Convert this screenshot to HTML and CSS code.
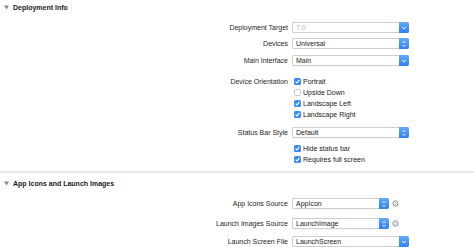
FILE: index.html
```html
<!DOCTYPE html>
<html lang="en">
<head>
    <meta charset="UTF-8">
    <title>General</title>
    <link rel="stylesheet" href="styles.css">
</head>
<body>
    <div class="section">
        <div class="section-head">
            <svg class="disclosure" width="5" height="5" viewBox="0 0 5 5"><polygon points="0,0.5 5,0.5 2.5,4.5" fill="#8a8a8a"/></svg>
            <span>Deployment Info</span>
        </div>
        <div class="field first">
            <label class="field-label">Deployment Target</label>
            <div class="popup">
                <span class="popup-value placeholder">7.0</span>
                <span class="popup-btn"><svg width="6" height="6" viewBox="0 0 6 6"><polyline points="1.2,2 3,4 4.8,2" fill="none" stroke="#fff" stroke-width="1"/></svg></span>
            </div>
        </div>
        <div class="field gap-5">
            <label class="field-label">Devices</label>
            <div class="popup">
                <span class="popup-value">Universal</span>
                <span class="popup-btn"><svg width="6" height="8" viewBox="0 0 6 8"><polyline points="1.5,3 3,1.5 4.5,3" fill="none" stroke="#fff" stroke-width="0.9"/><polyline points="1.5,5 3,6.5 4.5,5" fill="none" stroke="#fff" stroke-width="0.9"/></svg></span>
            </div>
        </div>
        <div class="field gap-6">
            <label class="field-label">Main Interface</label>
            <div class="popup">
                <span class="popup-value">Main</span>
                <span class="popup-btn"><svg width="6" height="6" viewBox="0 0 6 6"><polyline points="1.2,2 3,4 4.8,2" fill="none" stroke="#fff" stroke-width="1"/></svg></span>
            </div>
        </div>
        <div class="field gap-10">
            <label class="field-label">Device Orientation</label>
            <div class="checks">
                <div class="check on">Portrait</div>
                <div class="check">Upside Down</div>
                <div class="check on">Landscape Left</div>
                <div class="check on">Landscape Right</div>
            </div>
        </div>
        <div class="field gap-7">
            <label class="field-label">Status Bar Style</label>
            <div class="popup">
                <span class="popup-value">Default</span>
                <span class="popup-btn"><svg width="6" height="8" viewBox="0 0 6 8"><polyline points="1.5,3 3,1.5 4.5,3" fill="none" stroke="#fff" stroke-width="0.9"/><polyline points="1.5,5 3,6.5 4.5,5" fill="none" stroke="#fff" stroke-width="0.9"/></svg></span>
            </div>
        </div>
        <div class="field gap-5">
            <span class="field-label"></span>
            <div class="checks">
                <div class="check on">Hide status bar</div>
                <div class="check on">Requires full screen</div>
            </div>
        </div>
    </div>

    <div class="divider"></div>

    <div class="section">
        <div class="section-head">
            <svg class="disclosure" width="5" height="5" viewBox="0 0 5 5"><polygon points="0,0.5 5,0.5 2.5,4.5" fill="#8a8a8a"/></svg>
            <span>App Icons and Launch Images</span>
        </div>
        <div class="field first">
            <label class="field-label">App Icons Source</label>
            <div class="control-with-link">
                <div class="popup short">
                    <span class="popup-value">AppIcon</span>
                    <span class="popup-btn"><svg width="6" height="8" viewBox="0 0 6 8"><polyline points="1.5,3 3,1.5 4.5,3" fill="none" stroke="#fff" stroke-width="0.9"/><polyline points="1.5,5 3,6.5 4.5,5" fill="none" stroke="#fff" stroke-width="0.9"/></svg></span>
                </div>
                <svg class="goto" width="7" height="7" viewBox="0 0 7 7"><circle cx="3.5" cy="3.5" r="2.6" fill="none" stroke="#8c8c8c" stroke-width="1"/><polyline points="3,2.3 4.2,3.5 3,4.7" fill="none" stroke="#8c8c8c" stroke-width="0.9"/></svg>
            </div>
        </div>
        <div class="field gap-9">
            <label class="field-label">Launch Images Source</label>
            <div class="control-with-link">
                <div class="popup short">
                    <span class="popup-value">LaunchImage</span>
                    <span class="popup-btn"><svg width="6" height="8" viewBox="0 0 6 8"><polyline points="1.5,3 3,1.5 4.5,3" fill="none" stroke="#fff" stroke-width="0.9"/><polyline points="1.5,5 3,6.5 4.5,5" fill="none" stroke="#fff" stroke-width="0.9"/></svg></span>
                </div>
                <svg class="goto" width="7" height="7" viewBox="0 0 7 7"><circle cx="3.5" cy="3.5" r="2.6" fill="none" stroke="#8c8c8c" stroke-width="1"/><polyline points="3,2.3 4.2,3.5 3,4.7" fill="none" stroke="#8c8c8c" stroke-width="0.9"/></svg>
            </div>
        </div>
        <div class="field gap-7">
            <label class="field-label">Launch Screen File</label>
            <div class="popup">
                <span class="popup-value">LaunchScreen</span>
                <span class="popup-btn"><svg width="6" height="6" viewBox="0 0 6 6"><polyline points="1.2,2 3,4 4.8,2" fill="none" stroke="#fff" stroke-width="1"/></svg></span>
            </div>
        </div>
    </div>
</body>
</html>
```

FILE: styles.css
```css
body {
    margin: 0;
    background: #fff;
    font-family: "Liberation Sans", Arial, sans-serif;
    font-size: 7px;
    color: #262626;
}

.section {
    display: flex;
    flex-direction: column;
}

.section-head {
    display: flex;
    align-items: center;
    height: 14px;
    padding-left: 4px;
    font-weight: bold;
    color: #1a1a1a;
}

.disclosure {
    margin-right: 4px;
}

.field {
    display: grid;
    grid-template-columns: 288px 1fr;
    column-gap: 4px;
    align-items: start;
}

.field.first { margin-top: 8px; }
.gap-5 { margin-top: 5px; }
.gap-6 { margin-top: 6px; }
.gap-7 { margin-top: 7px; }
.gap-9 { margin-top: 9px; }
.gap-10 { margin-top: 10px; }

.field-label {
    text-align: right;
    line-height: 11px;
    white-space: nowrap;
}

.popup {
    display: flex;
    align-items: center;
    width: 117px;
    height: 11px;
    box-sizing: border-box;
    border: 1px solid #cfcfcf;
    border-right: none;
    border-radius: 2px;
    background: #fff;
    box-shadow: 0 0.5px 0 rgba(0, 0, 0, 0.05);
}

.popup.short {
    width: 97px;
}

.popup-value {
    flex: 1;
    padding-left: 3px;
    line-height: 9px;
    color: #1a1a1a;
}

.popup-value.placeholder {
    color: #b3b3b3;
}

.popup-btn {
    display: flex;
    align-items: center;
    justify-content: center;
    width: 10px;
    height: 11px;
    margin-top: -1px;
    margin-bottom: -1px;
    border-radius: 0 2px 2px 0;
    background: linear-gradient(#63abfa, #2e80f6);
}

.control-with-link {
    display: flex;
    align-items: center;
    gap: 3px;
}

.checks {
    display: flex;
    flex-direction: column;
}

.check {
    display: flex;
    align-items: center;
    height: 11px;
    padding-left: 2px;
    color: #1a1a1a;
}

.check::before {
    content: "";
    width: 7px;
    height: 7px;
    box-sizing: border-box;
    margin-right: 2px;
    border: 1px solid #c4c4c4;
    border-radius: 1.5px;
    background: #fff;
}

.check.on::before {
    border: none;
    background: #3a8bf6 url("data:image/svg+xml;utf8,<svg xmlns='http://www.w3.org/2000/svg' width='7' height='7' viewBox='0 0 7 7'><polyline points='1.6,3.6 3,5 5.4,1.8' fill='none' stroke='white' stroke-width='1.1'/></svg>") center / 7px 7px no-repeat;
}

.divider {
    height: 2px;
    margin-top: 6px;
    margin-bottom: 3px;
    background: #e6e6e6;
}
```
